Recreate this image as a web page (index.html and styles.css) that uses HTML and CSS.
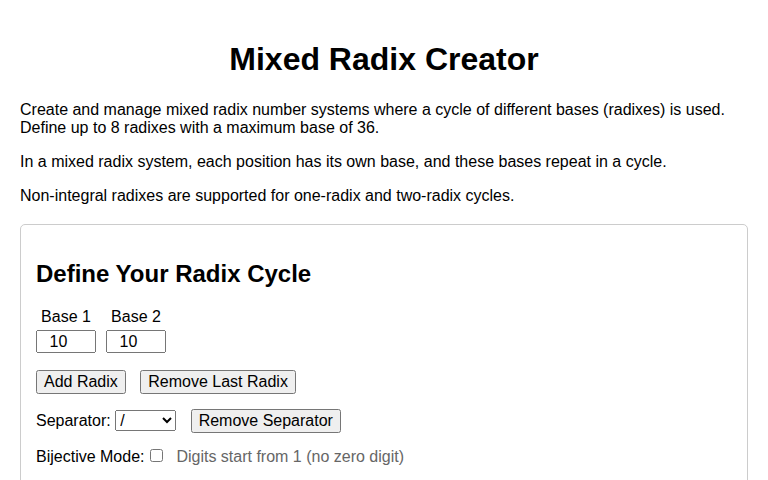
FILE: index.html
```html
<!DOCTYPE html>
<html>
<head>
<meta charset="utf-8">
<title>Mixed Radix Creator</title>
<link rel="stylesheet" href="styles.css">
</head>
<body>
<h1 class="title">Mixed Radix Creator</h1>
<p class="intro">Create and manage mixed radix number systems where a cycle of different bases (radixes) is used.<br>Define up to 8 radixes with a maximum base of 36.</p>
<p class="intro">In a mixed radix system, each position has its own base, and these bases repeat in a cycle.</p>
<p class="intro">Non-integral radixes are supported for one-radix and two-radix cycles.</p>
<div class="card">
  <h2 class="card-title">Define Your Radix Cycle</h2>
  <div class="radixes">
    <div class="radix">
      <label class="radix-label">Base 1</label>
      <input class="radix-input" type="number" value="10">
    </div>
    <div class="radix">
      <label class="radix-label">Base 2</label>
      <input class="radix-input" type="number" value="10">
    </div>
  </div>
  <div class="row row-buttons">
    <button class="btn">Add Radix</button>
    <button class="btn">Remove Last Radix</button>
  </div>
  <div class="row row-sep">
    <label class="field-label">Separator:</label>
    <select class="sep-select"><option>/</option><option>:</option><option>-</option></select>
    <button class="btn btn-sep">Remove Separator</button>
  </div>
  <div class="row">
    <label class="field-label">Bijective Mode:</label>
    <input class="check" type="checkbox">
    <span class="hint">Digits start from 1 (no zero digit)</span>
  </div>
</div>
</body>
</html>
```
FILE: styles.css
```css
body {
  margin: 0;
  padding: 20px;
  font-family: "Liberation Sans", Arial, sans-serif;
  font-size: 16px;
  color: #000;
  background: #fff;
}
.title {
  text-align: center;
  font-size: 32px;
  margin: 21px 0 23px;
}
.intro {
  margin: 16px 0;
}
.card {
  border: 1px solid #ccc;
  border-radius: 5px;
  padding: 15px;
  margin-top: 19px;
}
.card-title {
  font-size: 24px;
  margin: 20px 0;
}
.radixes {
  display: flex;
  gap: 10px;
  margin-bottom: 17px;
}
.radix {
  display: flex;
  flex-direction: column;
  align-items: center;
}
.radix-label {
  margin-bottom: 4px;
}
.radix-input {
  width: 60px;
  height: 23px;
  box-sizing: border-box;
  font-family: "Liberation Sans", Arial, sans-serif;
  font-size: 16px;
  text-align: center;
  margin: 0;
}
.row {
  margin-bottom: 16px;
}
.row-buttons {
  margin-bottom: 15px;
}
.row-sep {
  margin-bottom: 15px;
}
.btn {
  font-family: "Liberation Sans", Arial, sans-serif;
  font-size: 16px;
  margin-right: 10px;
}
.btn-sep {
  margin-left: 10px;
}
.sep-select {
  width: 61px;
  font-family: "Liberation Sans", Arial, sans-serif;
  font-size: 16px;
}
.check {
  margin: 0 9px 0 1px;
}
.hint {
  color: #666;
}
```
